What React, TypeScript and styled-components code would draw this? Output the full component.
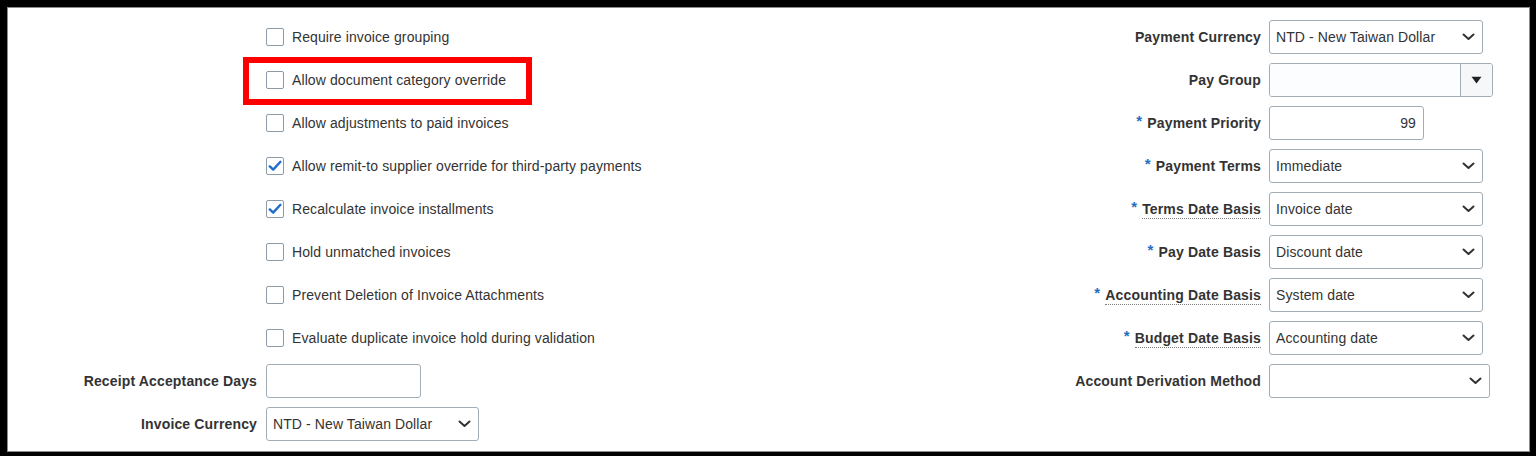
import React from "react";
import styled, { createGlobalStyle } from "styled-components";

const GlobalStyle = createGlobalStyle`
  html, body {
    margin: 0;
    padding: 0;
    background: #000;
  }
  body {
    font-family: "Liberation Sans", Arial, sans-serif;
    color: #333;
  }
`;

const Frame = styled.div`
  padding: 7px 6px 4px 7px;
  background: #000;
  width: 1536px;
  height: 456px;
  box-sizing: border-box;
`;

const Panel = styled.div`
  position: relative;
  box-sizing: border-box;
  height: 445px;
  background: #fff;
  border: 1px solid #8c8c8c;
  padding-top: 12px;
  display: flex;
  align-items: flex-start;
`;

const Form = styled.div<{ $labelCol: string; $fieldCol: string; $gap: number }>`
  display: grid;
  grid-template-columns: ${(p) => p.$labelCol} ${(p) => p.$fieldCol};
  column-gap: ${(p) => p.$gap}px;
  row-gap: 9px;
  grid-auto-rows: 34px;
  align-items: center;
`;

const LeftForm = styled(Form)``;

const RightForm = styled(Form)`
  margin-left: auto;
  margin-right: 36px;
`;

const Label = styled.label`
  grid-column: 1;
  justify-self: end;
  font-size: 14px;
  font-weight: bold;
  letter-spacing: 0.15px;
  color: #333;
  white-space: nowrap;
  display: flex;
  align-items: center;
`;

const LabelText = styled.span<{ $help?: boolean }>`
  ${(p) =>
    p.$help
      ? `border-bottom: 1px dotted #7a7a7a; padding-bottom: 1px; margin-bottom: -2px;`
      : ""}
`;

const Req = styled.span`
  color: #1f6fbf;
  font-weight: bold;
  font-size: 15px;
  margin-right: 5px;
  position: relative;
  top: -3px;
`;

const Cell = styled.div`
  grid-column: 2;
  display: flex;
  align-items: center;
`;

const CheckRow = styled.label`
  grid-column: 2;
  display: flex;
  align-items: center;
  gap: 8px;
  font-size: 14px;
  letter-spacing: 0.1px;
  color: #333;
  white-space: nowrap;
`;

const Box = styled.span`
  width: 18px;
  height: 18px;
  box-sizing: border-box;
  border: 1px solid #8e9aa5;
  border-radius: 2px;
  background: #fff;
  display: flex;
  align-items: center;
  justify-content: center;
`;

const Field = styled.div<{ $w: number }>`
  width: ${(p) => p.$w}px;
  height: 34px;
  box-sizing: border-box;
  border: 1px solid #a3adb6;
  border-radius: 3px;
  background: #fff;
  display: flex;
  align-items: center;
  font-size: 14px;
  letter-spacing: 0.1px;
  color: #333;
  overflow: hidden;
`;

const Value = styled.span<{ $right?: boolean }>`
  flex: 1;
  padding: 0 ${(p) => (p.$right ? "7px" : "0")} 0 ${(p) => (p.$right ? "0" : "6px")};
  text-align: ${(p) => (p.$right ? "right" : "left")};
  white-space: nowrap;
`;

const Chevron = styled.span`
  width: 14px;
  margin-right: 7px;
  display: flex;
  align-items: center;
  justify-content: center;
`;

const ComboInput = styled.div`
  flex: 1;
  height: 100%;
  background: #fcfdfe;
`;

const ComboButton = styled.div`
  width: 31px;
  height: 100%;
  border-left: 1px solid #a3adb6;
  background: #f6f7f8;
  display: flex;
  align-items: center;
  justify-content: center;
`;

const Highlight = styled.div`
  position: absolute;
  left: 235px;
  top: 49px;
  width: 289px;
  height: 48px;
  box-sizing: border-box;
  border: 6px solid #ff0000;
  pointer-events: none;
`;

const ChevronIcon = () => (
  <svg width="13" height="8" viewBox="0 0 13 8">
    <path d="M1.5 1.5 L6.5 6 L11.5 1.5" fill="none" stroke="#333" strokeWidth="2" strokeLinecap="round" strokeLinejoin="round" />
  </svg>
);

const CheckIcon = () => (
  <svg width="14" height="12" viewBox="0 0 14 12">
    <path d="M1.8 6.4 L5.2 9.6 L12.4 1.8" fill="none" stroke="#1f6fca" strokeWidth="2.4" strokeLinecap="round" strokeLinejoin="round" />
  </svg>
);

const TriangleIcon = () => (
  <svg width="11" height="8" viewBox="0 0 11 8">
    <path d="M0.5 0.8 L10.5 0.8 L5.5 7.4 Z" fill="#222" />
  </svg>
);

type SelectProps = { w: number; value?: string };
const Select = ({ w, value = "" }: SelectProps) => (
  <Field $w={w}>
    <Value>{value}</Value>
    <Chevron>
      <ChevronIcon />
    </Chevron>
  </Field>
);

const checks: { text: string; checked?: boolean }[] = [
  { text: "Require invoice grouping" },
  { text: "Allow document category override" },
  { text: "Allow adjustments to paid invoices" },
  { text: "Allow remit-to supplier override for third-party payments", checked: true },
  { text: "Recalculate invoice installments", checked: true },
  { text: "Hold unmatched invoices" },
  { text: "Prevent Deletion of Invoice Attachments" },
  { text: "Evaluate duplicate invoice hold during validation" },
];

type RightRow = {
  label: string;
  req?: boolean;
  help?: boolean;
  kind: "select" | "combo" | "text";
  w: number;
  value?: string;
};

const rightRows: RightRow[] = [
  { label: "Payment Currency", kind: "select", w: 214, value: "NTD - New Taiwan Dollar" },
  { label: "Pay Group", kind: "combo", w: 224 },
  { label: "Payment Priority", req: true, kind: "text", w: 155, value: "99" },
  { label: "Payment Terms", req: true, kind: "select", w: 214, value: "Immediate" },
  { label: "Terms Date Basis", req: true, help: true, kind: "select", w: 214, value: "Invoice date" },
  { label: "Pay Date Basis", req: true, kind: "select", w: 214, value: "Discount date" },
  { label: "Accounting Date Basis", req: true, help: true, kind: "select", w: 214, value: "System date" },
  { label: "Budget Date Basis", req: true, help: true, kind: "select", w: 214, value: "Accounting date" },
  { label: "Account Derivation Method", kind: "select", w: 221 },
];

export default function App() {
  return (
    <>
      <GlobalStyle />
      <Frame>
        <Panel>
          <LeftForm $labelCol="249px" $fieldCol="auto" $gap={9}>
            {checks.map((c) => (
              <CheckRow key={c.text}>
                <Box>{c.checked && <CheckIcon />}</Box>
                {c.text}
              </CheckRow>
            ))}
            <Label>
              <LabelText>Receipt Acceptance Days</LabelText>
            </Label>
            <Cell>
              <Field $w={155} />
            </Cell>
            <Label>
              <LabelText>Invoice Currency</LabelText>
            </Label>
            <Cell>
              <Select w={213} value="NTD - New Taiwan Dollar" />
            </Cell>
          </LeftForm>

          <RightForm $labelCol="auto" $fieldCol="224px" $gap={8}>
            {rightRows.map((r) => (
              <React.Fragment key={r.label}>
                <Label>
                  {r.req && <Req>*</Req>}
                  <LabelText $help={r.help}>{r.label}</LabelText>
                </Label>
                <Cell>
                  {r.kind === "select" && <Select w={r.w} value={r.value} />}
                  {r.kind === "text" && (
                    <Field $w={r.w}>
                      <Value $right>{r.value}</Value>
                    </Field>
                  )}
                  {r.kind === "combo" && (
                    <Field $w={r.w}>
                      <ComboInput />
                      <ComboButton>
                        <TriangleIcon />
                      </ComboButton>
                    </Field>
                  )}
                </Cell>
              </React.Fragment>
            ))}
          </RightForm>

          <Highlight />
        </Panel>
      </Frame>
    </>
  );
}
